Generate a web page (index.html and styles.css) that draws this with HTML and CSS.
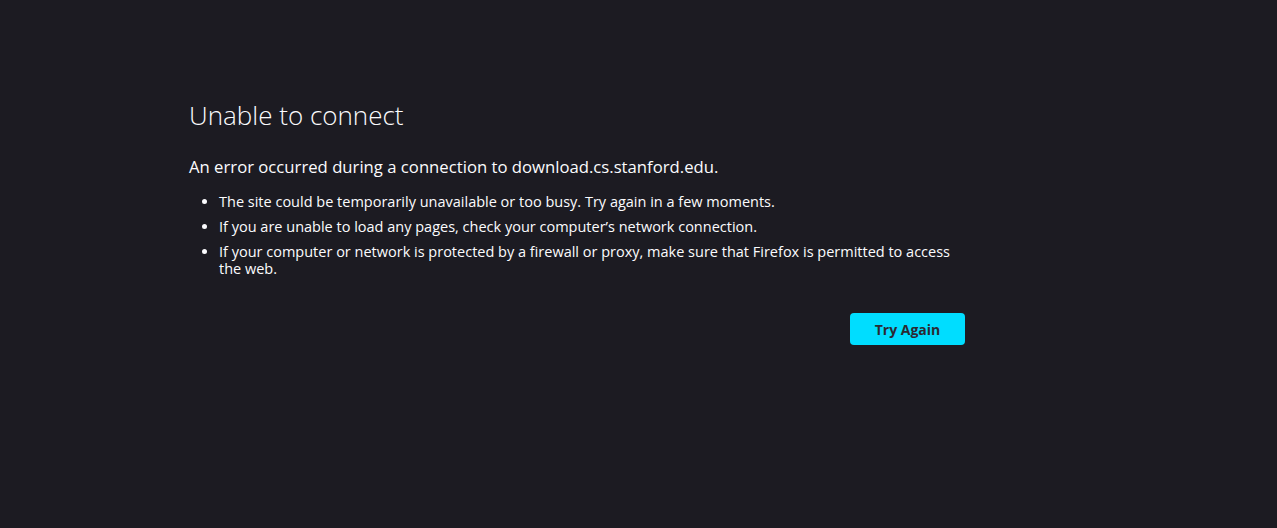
FILE: index.html
```html
<!DOCTYPE html>
<html lang="en">
<head>
<meta charset="utf-8">
<title>Problem loading page</title>
<link rel="stylesheet" href="styles.css">
</head>
<body>
<div class="container">
  <h1 class="title">Unable to connect</h1>
  <p class="desc">An error occurred during a connection to download.cs.stanford.edu.</p>
  <ul class="list">
    <li>The site could be temporarily unavailable or too busy. Try again in a few moments.</li>
    <li>If you are unable to load any pages, check your computer’s network connection.</li>
    <li>If your computer or network is protected by a firewall or proxy, make sure that Firefox is permitted to access the web.</li>
  </ul>
  <div class="actions">
    <button class="btn">Try Again</button>
  </div>
</div>
</body>
</html>
```
FILE: styles.css
```css
html, body {
  margin: 0;
  padding: 0;
  height: 100%;
}
body {
  background: #1c1b22;
  color: #fbfbfe;
  font-family: "Open Sans", sans-serif;
  font-size: 14px;
}
.container {
  width: 776px;
  margin-left: 189px;
  padding-top: 97px;
}
.title {
  margin: 0;
  font-size: 26px;
  font-weight: 300;
  line-height: 36px;
}
.desc {
  margin: 22px 0 0;
  font-size: 16.7px;
  line-height: 24px;
}
.list {
  margin: 14px 0 0;
  padding-left: 30px;
  font-size: 14.5px;
  line-height: 17px;
}
.list li {
  margin-bottom: 8px;
}
.actions {
  display: flex;
  justify-content: flex-end;
  margin-top: 36px;
}
.btn {
  width: 115px;
  height: 32px;
  border: none;
  border-radius: 4px;
  background: #00ddff;
  color: #2b2a33;
  font-family: "Open Sans", sans-serif;
  font-size: 14px;
  font-weight: 700;
}
```
